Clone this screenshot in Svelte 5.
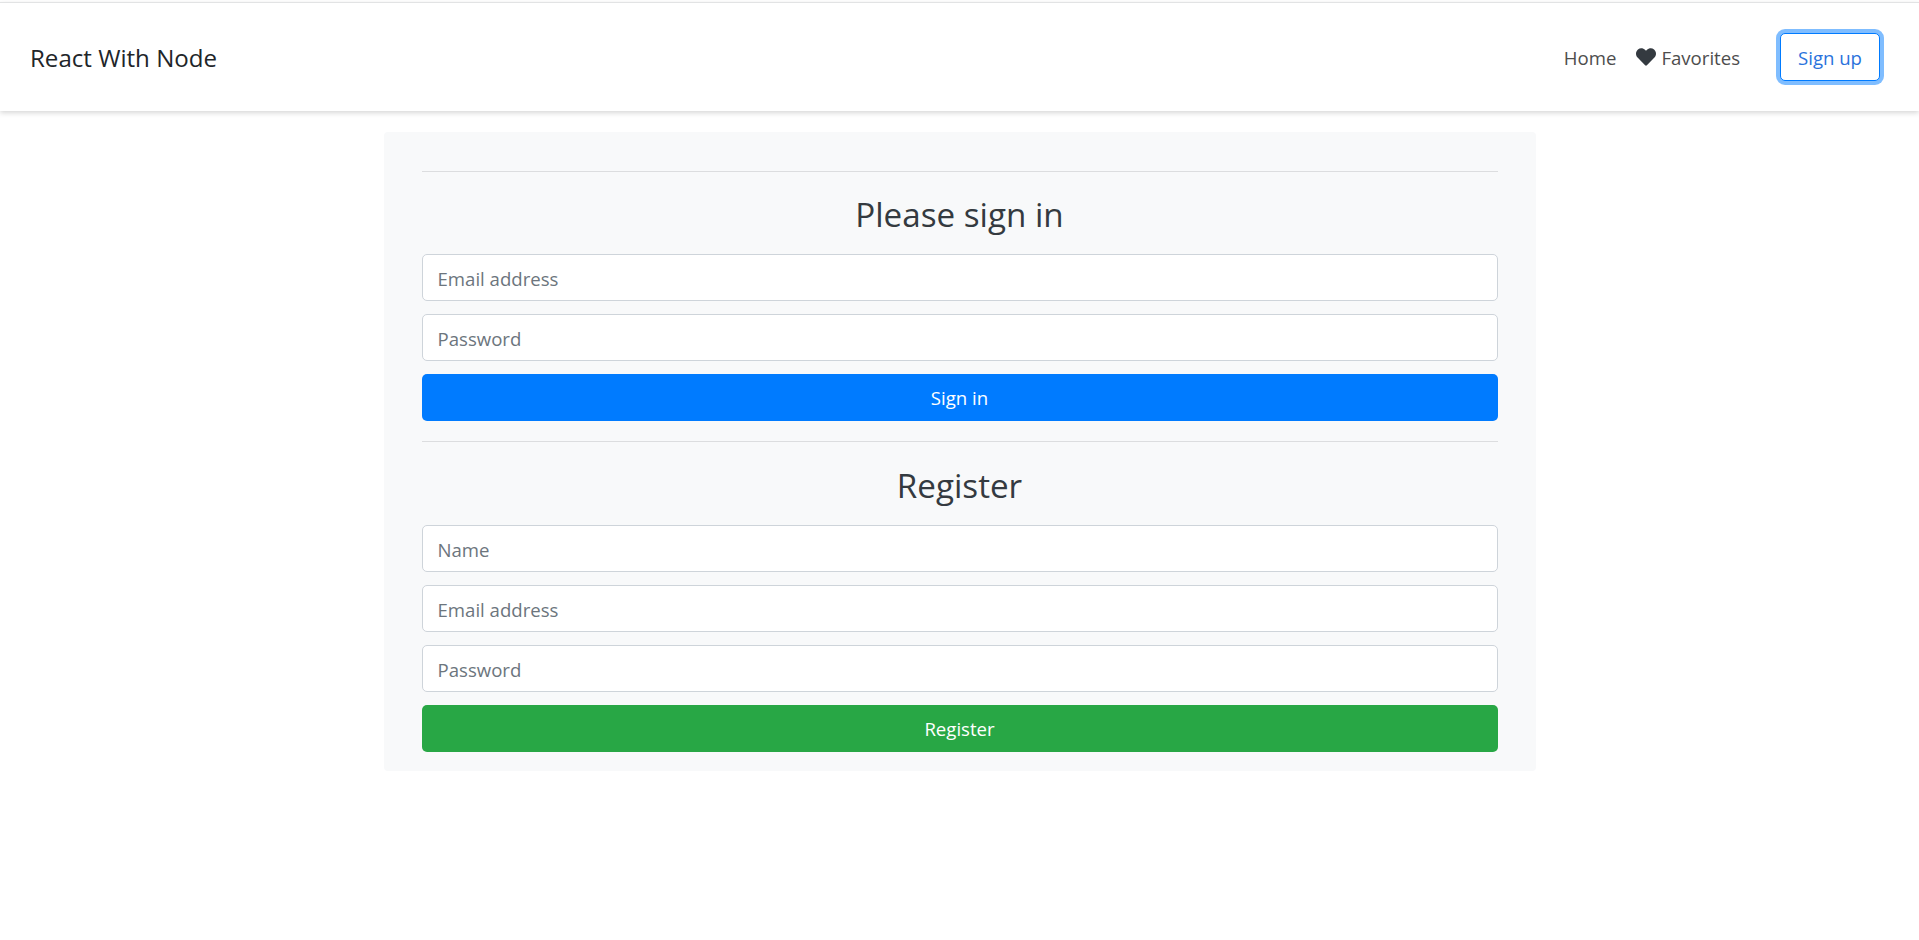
<script>
  const signIn = ['Email address', 'Password'];
  const register = ['Name', 'Email address', 'Password'];
</script>

<div class="page">
  <nav class="navbar">
    <a class="brand" href="#top">React With Node</a>
    <div class="links">
      <a class="link" href="#top">Home</a>
      <a class="link" href="#top">
        <svg class="heart" viewBox="0 0 512 512" aria-hidden="true"><path d="M462.3 62.6C407.5 15.9 326 24.3 275.7 76.2L256 96.5l-19.7-20.3C186.1 24.3 104.5 15.9 49.7 62.6c-62.8 53.6-66.1 149.8-9.9 207.9l193.5 199.8c12.5 12.9 32.8 12.9 45.3 0l193.5-199.8c56.3-58.1 53-154.3-9.8-207.9z"/></svg>
        Favorites
      </a>
      <button class="signup" type="button">Sign up</button>
    </div>
  </nav>

  <main class="card">
    <hr />
    <h2>Please sign in</h2>
    {#each signIn as p}
      <input class="field" placeholder={p} />
    {/each}
    <button class="btn blue" type="button">Sign in</button>
    <hr class="mid" />
    <h2 class="second">Register</h2>
    {#each register as p}
      <input class="field" placeholder={p} />
    {/each}
    <button class="btn green" type="button">Register</button>
  </main>
</div>

<style>
  :global(body) {
    margin: 0;
    background: #fff;
    font-family: "Open Sans", "Noto Sans", sans-serif;
    color: #212529;
  }
  .page {
    min-height: 940px;
    border-top: 2px solid transparent;
    box-sizing: border-box;
    background: linear-gradient(#e3e3e3, #e3e3e3) top / 100% 1px no-repeat;
  }
  .navbar {
    display: flex;
    align-items: center;
    justify-content: space-between;
    height: 109px;
    padding: 0 39px 0 30px;
    border-top: 1px solid #e2e3e4;
    box-shadow: 0 2px 5px rgba(0, 0, 0, 0.16);
    box-sizing: border-box;
    background: #fff;
  }
  .brand {
    font-size: 24.1px;
    color: #212529;
    text-decoration: none;
  }
  .links {
    display: flex;
    align-items: center;
  }
  .link {
    display: flex;
    align-items: center;
    gap: 5px;
    font-size: 18.6px;
    color: #4d4d4d;
    text-decoration: none;
    margin-right: 20px;
  }
  .heart {
    width: 20px;
    height: 20px;
    fill: #343a40;
  }
  .signup {
    width: 100px;
    height: 48px;
    margin-left: 20px;
    background: #fff;
    border: 1px solid #007bff;
    border-radius: 5px;
    box-shadow: 0 0 0 4px rgba(0, 123, 255, 0.5);
    color: #2a72dc;
    font: inherit;
    font-size: 18.6px;
  }
  .card {
    display: flex;
    flex-direction: column;
    width: 1152px;
    height: 639px;
    margin: 21px auto 0;
    padding: 39px 38px 0;
    box-sizing: border-box;
    background: #f8f9fa;
    border-radius: 4px;
  }
  hr {
    width: 100%;
    margin: 0;
    border: 0;
    border-top: 1px solid #dcdddf;
  }
  hr.mid {
    margin-top: 20px;
  }
  h2 {
    margin: 18px 0 15px;
    height: 49px;
    line-height: 49px;
    text-align: center;
    font-size: 33.2px;
    font-weight: 400;
    color: #343a40;
  }
  h2.second {
    margin: 19px 0 15px;
  }
  .field {
    height: 47px;
    margin-bottom: 13px;
    padding: 1px 15px 0;
    box-sizing: border-box;
    background: #fff;
    border: 1px solid #ced4da;
    border-radius: 5px;
    font: inherit;
    font-size: 18.6px;
    outline: none;
  }
  .field::placeholder {
    color: #6c757d;
    opacity: 1;
  }
  .btn {
    height: 47px;
    padding-top: 1px;
    border: 0;
    border-radius: 5px;
    color: #fff;
    font: inherit;
    font-size: 18.6px;
  }
  .blue { background: #007bff; }
  .green { background: #28a745; }
</style>
